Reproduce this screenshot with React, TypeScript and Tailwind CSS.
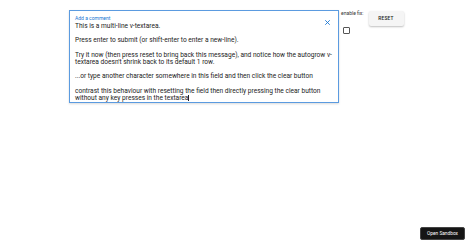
import React from "react";

const lines: React.ReactNode[] = [
  "This is a multi-line v-textarea.",
  "",
  "Press enter to submit (or shift-enter to enter a new-line).",
  "",
  <>
    <span className="whitespace-nowrap">
      Try it now (then press reset to bring back this message), and notice how the autogrow v-
    </span>
    <br />
    textarea doesn't shrink back to its default 1 row.
  </>,
  "",
  "...or type another character somewhere in this field and then click the clear button",
  "",
  "contrast this behaviour with resetting the field then directly pressing the clear button without any key presses in the textarea",
];

export default function App() {
  return (
    <div
      className="relative w-[474px] h-[248px] bg-white overflow-hidden"
      style={{ fontFamily: "Roboto, 'Liberation Sans', sans-serif" }}
    >
      <div className="flex items-start pl-[69px] pt-[10px]">
        <div className="relative w-[270px] h-[93px] border border-[#5b9be0] bg-white shadow-[0_1px_2px_rgba(0,0,0,0.15)] pl-[5px] pt-[4px]">
          <div className="text-[5px] leading-[6px] text-[#1976d2]">Add a comment</div>
          <div className="text-[6.6px] leading-[7.2px] text-[#222] w-[256px] mt-[2px]">
            {lines.map((l, i) => (
              <div key={i} className="min-h-[7.2px]">
                {l}
                {i === lines.length - 1 && (
                  <span className="inline-block w-[0.6px] h-[6.5px] bg-[#222] align-middle" />
                )}
              </div>
            ))}
          </div>
          <button className="absolute right-[6px] top-[7px] w-[9px] h-[9px] flex items-center justify-center">
            <svg viewBox="0 0 24 24" className="w-[9px] h-[9px]">
              <path d="M6 6L18 18M18 6L6 18" stroke="#1976d2" strokeWidth="2.4" fill="none" />
            </svg>
          </button>
        </div>
        <div className="flex flex-col ml-[1px]">
          <div className="text-[5px] leading-[7px] text-[#333] pl-[1px]">enable fix:</div>
          <div className="mt-[10px] ml-[3px] w-[6.5px] h-[6.5px] border border-[#555] rounded-[1px]" />
        </div>
        <button className="ml-[5px] mt-[1px] w-[35px] h-[15px] bg-[#f5f5f5] rounded-[2px] shadow-[0_1px_2px_rgba(0,0,0,0.25)] text-[4.8px] font-medium tracking-[0.2px] text-[#222]">
          RESET
        </button>
      </div>
      <button className="absolute right-[9px] bottom-[8px] w-[45px] h-[13px] bg-[#151515] rounded-[2px] border border-[#444] text-[4.8px] text-white">
        Open Sandbox
      </button>
    </div>
  );
}
